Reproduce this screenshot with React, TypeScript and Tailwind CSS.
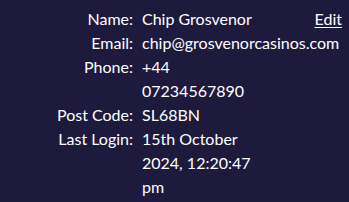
import React from 'react';

const rows: { label: string; value: string }[] = [
  { label: 'Name:', value: 'Chip Grosvenor' },
  { label: 'Email:', value: 'chip@grosvenorcasinos.com' },
  { label: 'Phone:', value: '+44 07234567890' },
  { label: 'Post Code:', value: 'SL68BN' },
  { label: 'Last Login:', value: '15th October 2024, 12:20:47 pm' },
];

const App = () => {
  return (
    <div
      className="w-[349px] h-[202px] overflow-hidden bg-[#1e1a3e] text-white pt-[7px] pl-[9px] pr-[7px]"
      style={{ fontFamily: 'Lato, "Open Sans", sans-serif' }}
    >
      <div className="grid grid-cols-[124px_125px_1fr] gap-x-[9px] text-[16px] leading-[24px]">
        {rows.map((row, i) => (
          <React.Fragment key={row.label}>
            <div className="text-right whitespace-nowrap">{row.label}</div>
            <div className="break-normal">{row.value}</div>
            <div className="text-right">
              {i === 0 && (
                <a href="#" className="underline underline-offset-2">
                  Edit
                </a>
              )}
            </div>
          </React.Fragment>
        ))}
      </div>
    </div>
  );
};

export default App;
